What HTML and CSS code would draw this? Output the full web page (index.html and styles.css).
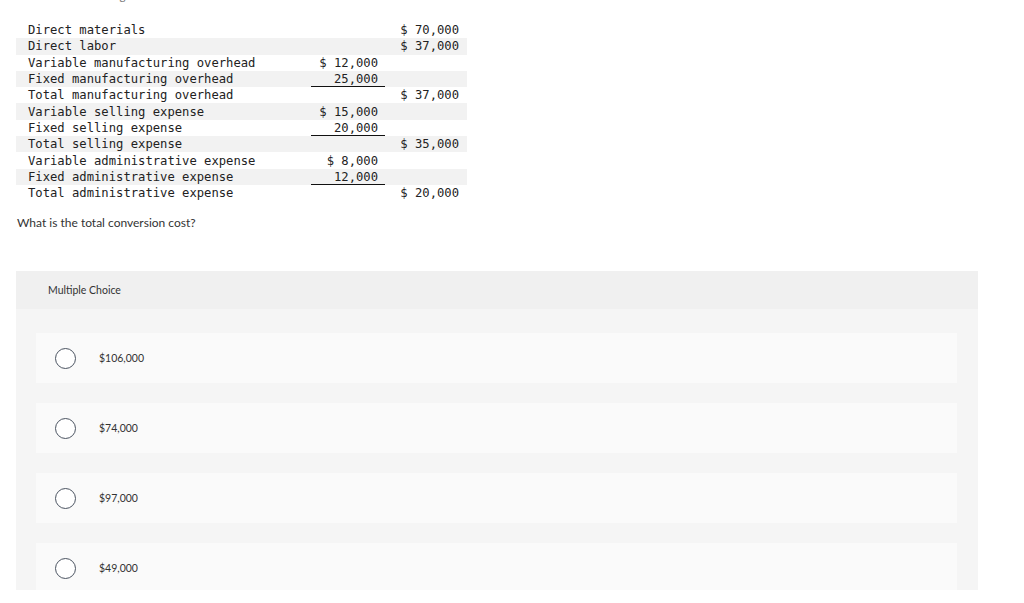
FILE: index.html
```html
<!DOCTYPE html>
<html>
<head>
<meta charset="utf-8">
<link rel="stylesheet" href="styles.css">
</head>
<body>
<div class="page">
  <p class="intro">Assume the following information:</p>
  <table class="data">
    <tr><td class="label">Direct materials</td><td class="mid"></td><td class="tot">$ 70,000</td></tr>
    <tr class="alt"><td class="label">Direct labor</td><td class="mid"></td><td class="tot">$ 37,000</td></tr>
    <tr><td class="label">Variable manufacturing overhead</td><td class="mid">$ 12,000</td><td class="tot"></td></tr>
    <tr class="alt"><td class="label">Fixed manufacturing overhead</td><td class="mid under">25,000</td><td class="tot"></td></tr>
    <tr><td class="label">Total manufacturing overhead</td><td class="mid"></td><td class="tot">$ 37,000</td></tr>
    <tr class="alt"><td class="label">Variable selling expense</td><td class="mid">$ 15,000</td><td class="tot"></td></tr>
    <tr><td class="label">Fixed selling expense</td><td class="mid under">20,000</td><td class="tot"></td></tr>
    <tr class="alt"><td class="label">Total selling expense</td><td class="mid"></td><td class="tot">$ 35,000</td></tr>
    <tr><td class="label">Variable administrative expense</td><td class="mid">$ 8,000</td><td class="tot"></td></tr>
    <tr class="alt"><td class="label">Fixed administrative expense</td><td class="mid under">12,000</td><td class="tot"></td></tr>
    <tr><td class="label">Total administrative expense</td><td class="mid"></td><td class="tot">$ 20,000</td></tr>
  </table>
  <p class="question">What is the total conversion cost?</p>
  <section class="mc">
    <div class="mc-head">Multiple Choice</div>
    <div class="mc-body">
      <div class="opt"><span class="radio"></span><span class="opt-text">$106,000</span></div>
      <div class="opt"><span class="radio"></span><span class="opt-text">$74,000</span></div>
      <div class="opt"><span class="radio"></span><span class="opt-text">$97,000</span></div>
      <div class="opt"><span class="radio"></span><span class="opt-text">$49,000</span></div>
    </div>
  </section>
</div>
</body>
</html>
```

FILE: styles.css
```css
html, body {
  margin: 0;
  padding: 0;
  background: #fff;
}
.page {
  height: 590px;
  overflow: hidden;
  padding: 0 0 0 16px;
  font-family: Lato, "Open Sans", sans-serif;
  color: #222;
}
.intro {
  margin: -11px 0 0 1px;
  font-size: 11.5px;
  line-height: 14px;
  color: #777;
}
.data {
  margin-top: 19px;
  border-collapse: collapse;
  font-family: "DejaVu Sans Mono", monospace;
  font-size: 12.2px;
  color: #222;
}
.data td {
  padding: 0;
  height: 16.3px;
  line-height: 16px;
  white-space: pre;
}
.data tr.alt td {
  background: #f2f2f2;
}
.data td.label {
  width: 283px;
  padding-left: 12px;
}
.data td.mid {
  width: 67px;
  padding-right: 7px;
  text-align: right;
}
.data td.tot {
  width: 74px;
  padding-right: 8px;
  text-align: right;
}
.data td.under {
  box-shadow: inset 0 -1px 0 #111;
}
.question {
  margin: 14px 0 0 1px;
  font-size: 12px;
  line-height: 16px;
  color: #333;
}
.mc {
  margin-top: 40px;
  width: 962px;
  background: #f5f5f5;
}
.mc-head {
  height: 38px;
  display: flex;
  align-items: center;
  padding-left: 32px;
  background: #f0f0f0;
  font-size: 10.5px;
  color: #333;
}
.mc-body {
  display: flex;
  flex-direction: column;
  gap: 20px;
  padding: 24px 21px 20px 20px;
}
.opt {
  height: 50px;
  display: flex;
  align-items: center;
  background: #fafafa;
  padding-left: 19px;
}
.radio {
  width: 21px;
  height: 21px;
  border: 1px solid #4a5360;
  border-radius: 50%;
  box-sizing: border-box;
  background: #fff;
  flex: none;
}
.opt-text {
  margin-left: 23px;
  font-size: 10.5px;
  color: #333;
}
```
